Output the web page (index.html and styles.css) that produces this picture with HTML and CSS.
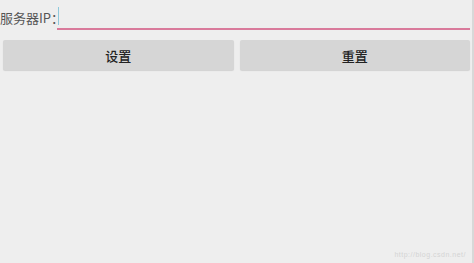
FILE: index.html
```html
<!DOCTYPE html>
<html>
<head>
<meta charset="utf-8">
<link rel="stylesheet" href="styles.css">
</head>
<body>
<div class="screen">
  <div class="row">
    <span class="label">服务器IP：</span>
    <div class="field"><span class="cursor"></span></div>
  </div>
  <div class="buttons">
    <div class="btn">设置</div>
    <div class="btn">重置</div>
  </div>
  <div class="spacer"></div>
  <div class="watermark">http://blog.csdn.net/</div>
</div>
</body>
</html>
```
FILE: styles.css
```css
html, body {
  margin: 0;
  padding: 0;
  background: #eeeeee;
}
.screen {
  width: 474px;
  height: 263px;
  display: flex;
  flex-direction: column;
  font-family: "Noto Sans CJK SC", "Noto Sans", sans-serif;
  box-sizing: border-box;
  border-right: 2px solid #d8d8d8;
}
.row {
  display: flex;
  align-items: flex-end;
  height: 32px;
  padding-top: 0;
  box-sizing: border-box;
}
.label {
  font-size: 13px;
  color: #555;
  width: 57px;
  line-height: 18px;
  padding-bottom: 5px;
  white-space: nowrap;
}
.field {
  width: 413px;
  height: 23px;
  border-bottom: 2px solid #d97a9b;
  box-sizing: border-box;
  display: flex;
  align-items: flex-end;
  padding-bottom: 3px;
  margin-bottom: 2px;
}
.cursor {
  display: block;
  width: 1px;
  height: 18px;
  margin-left: 1px;
  background: #8ec9dc;
}
.buttons {
  display: flex;
  gap: 6px;
  padding: 8px 2px 0 3px;
}
.btn {
  flex: 1;
  height: 30px;
  background: #d6d6d6;
  border-radius: 2px;
  box-shadow: 0 1px 1px rgba(0,0,0,0.12);
  display: flex;
  align-items: center;
  justify-content: center;
  font-size: 13px;
  font-weight: 500;
  color: #222;
}
.spacer { flex: 1; }
.watermark {
  align-self: flex-end;
  font-family: "Liberation Sans", sans-serif;
  font-size: 7px;
  color: #d4d4d4;
  padding: 0 6px 5px 0;
  letter-spacing: 0.5px;
}
```
